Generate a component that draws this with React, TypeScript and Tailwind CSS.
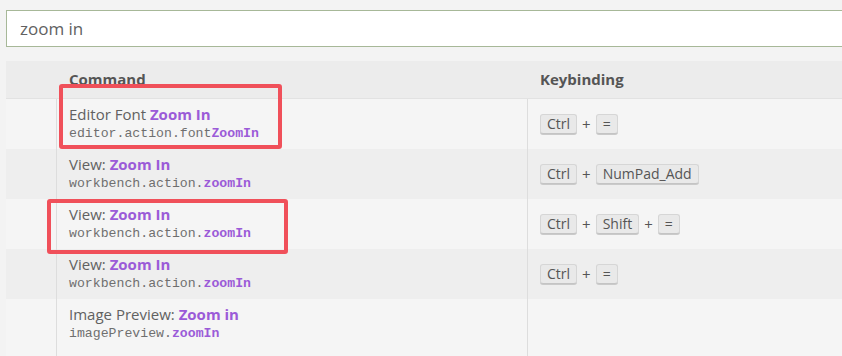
import React from "react";

const sans = { fontFamily: '"Open Sans", "Noto Sans", sans-serif' };
const mono = { fontFamily: '"Liberation Mono", "DejaVu Sans Mono", monospace' };

type Row = { pre: string; hl: string; idPre: string; idHl: string; keys: string[] };

const rows: Row[] = [
  { pre: "Editor Font ", hl: "Zoom In", idPre: "editor.action.font", idHl: "ZoomIn", keys: ["Ctrl", "="] },
  { pre: "View: ", hl: "Zoom In", idPre: "workbench.action.", idHl: "zoomIn", keys: ["Ctrl", "NumPad_Add"] },
  { pre: "View: ", hl: "Zoom In", idPre: "workbench.action.", idHl: "zoomIn", keys: ["Ctrl", "Shift", "="] },
  { pre: "View: ", hl: "Zoom In", idPre: "workbench.action.", idHl: "zoomIn", keys: ["Ctrl", "="] },
  { pre: "Image Preview: ", hl: "Zoom in", idPre: "imagePreview.", idHl: "zoomIn", keys: [] },
];

function Kbd({ k }: { k: string }) {
  return (
    <span className="inline-flex h-[20px] items-center rounded-[3px] border border-[#d6d6d6] border-b-[#c4c4c4] bg-[#e9e9e9] px-[6px] text-[14px] leading-none text-[#555] shadow-[0_1px_0_#cacaca]">
      {k}
    </span>
  );
}

export default function App() {
  return (
    <div className="relative h-[356px] w-[842px] overflow-hidden bg-[#f3f3f3]" style={sans}>
      <div className="pl-[6px] pt-[10px]">
        <div className="flex h-[37px] items-center border border-r-0 border-[#a7b898] bg-white pl-[13px] text-[17px] text-[#616161]">
          zoom in
        </div>
      </div>
      <div className="ml-[6px] mt-[14px]">
        <div className="grid h-[38px] grid-cols-[50px_471px_1fr] items-center border-b border-[#e2e2e2] bg-[#ececec] text-[15px] font-bold text-[#555]">
          <div />
          <div className="pl-[13px]">Command</div>
          <div className="pl-[13px]">Keybinding</div>
        </div>
        {rows.map((r, i) => {
          const last = i === rows.length - 1;
          return (
            <div
              key={i}
              className={`grid grid-cols-[50px_471px_1fr] ${last ? "h-[70px]" : "h-[50px]"} ${i % 2 === 0 ? "bg-[#f5f5f5]" : "bg-[#eeeeee]"}`}
            >
              <div />
              <div
                className={`flex flex-col border-l border-[#dddddd] pl-[12px] ${last ? "justify-start pt-[5px]" : "justify-center"}`}
              >
                <div className="text-[15px] leading-[20px] text-[#616161]">
                  {r.pre}
                  <span className="font-bold text-[#9b5bd8]">{r.hl}</span>
                </div>
                <div className="text-[13.2px] leading-[20px] text-[#6f6f6f]" style={mono}>
                  {r.idPre}
                  <span className="font-bold text-[#9b5bd8]">{r.idHl}</span>
                </div>
              </div>
              <div className="flex items-center gap-[5px] border-l border-[#dddddd] pl-[12px] text-[15px] text-[#555]">
                {r.keys.map((k, j) => (
                  <React.Fragment key={j}>
                    {j > 0 && <span>+</span>}
                    <Kbd k={k} />
                  </React.Fragment>
                ))}
              </div>
            </div>
          );
        })}
      </div>
      <div className="absolute left-[59px] top-[84px] h-[65px] w-[223px] rounded-[3px] border-[4px] border-[#f0505a]" />
      <div className="absolute left-[47px] top-[199px] h-[55px] w-[241px] rounded-[3px] border-[4px] border-[#f0505a]" />
    </div>
  );
}
